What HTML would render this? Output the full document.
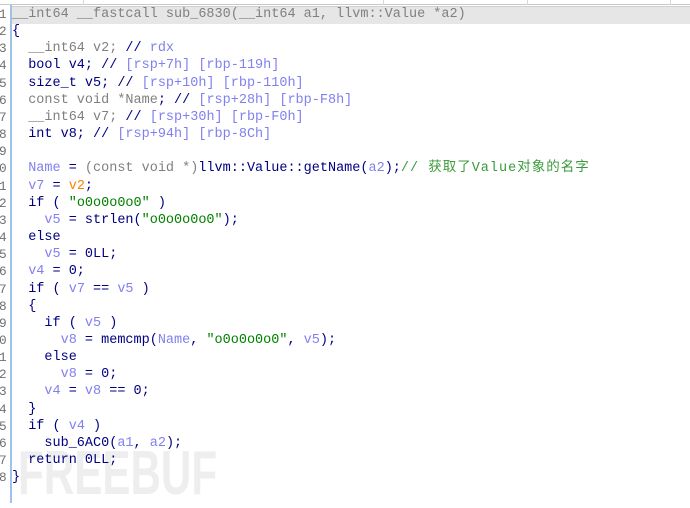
<!DOCTYPE html>
<html><head><meta charset="utf-8"><style>
body{margin:0;width:690px;height:503px;background:#fff;overflow:hidden;position:relative;font-family:"Liberation Mono","Noto Sans CJK SC",monospace;font-size:13.5px;}
.top{position:absolute;left:0;top:4px;width:690px;height:1px;background:#c8c8c8}
.sep{position:absolute;top:0;width:1px;height:5px;background:#d8d8d8}
.vl{position:absolute;left:10px;top:5px;width:2px;height:498px;background:#9fc3e8}
.hl{position:absolute;left:12px;top:6px;width:678px;height:17px;background:#e6e6e6;border-top:1px solid #d0d0d0}
.g{position:absolute;left:-1px;top:6px;color:#707070;line-height:17.15px;white-space:pre;font-size:12.75px}
.c{position:absolute;left:12px;top:6px;line-height:17.15px;white-space:pre;color:#000080}
.v{color:#8080f0}.k{color:#808080}.o{color:#ff8000}.s{color:#008000}.m{color:#3a9a3a;letter-spacing:1px}
.wm{position:absolute;left:18px;top:443px;font:bold 62px/1 "Liberation Sans",sans-serif;color:#eeeeee;transform:scaleX(0.68);transform-origin:0 0}
</style></head><body>
<div class="top"></div><div class="sep" style="left:83px"></div><div class="sep" style="left:383px"></div><div class="sep" style="left:527px"></div><div class="sep" style="left:670px"></div>
<div class="hl"></div>
<div class="wm">FREEBUF</div>
<div class="vl"></div>
<div class="g">1
2
3
4
5
6
7
8
9
0
1
2
3
4
5
6
7
8
9
0
1
2
3
4
5
6
7
8</div>
<div class="c"><span class="k">__int64 __fastcall sub_6830(__int64 a1, llvm::Value *a2)</span>
{
  <span class="k">__int64 v2;</span> // <span class="v">rdx</span>
  bool v4; // <span class="v">[rsp+7h] [rbp-119h]</span>
  size_t v5; // <span class="v">[rsp+10h] [rbp-110h]</span>
  <span class="k">const void *Name</span>; // <span class="v">[rsp+28h] [rbp-F8h]</span>
  <span class="k">__int64 v7;</span> // <span class="v">[rsp+30h] [rbp-F0h]</span>
  int v8; // <span class="v">[rsp+94h] [rbp-8Ch]</span>

  <span class="v">Name</span> = <span class="k">(const void *)</span>llvm::Value::getName(<span class="v">a2</span>);<span class="m">// 获取了Value对象的名字</span>
  <span class="v">v7</span> = <span class="o">v2</span>;
  if ( <span class="s">"o0o0o0o0"</span> )
    <span class="v">v5</span> = strlen(<span class="s">"o0o0o0o0"</span>);
  else
    <span class="v">v5</span> = 0LL;
  <span class="v">v4</span> = 0;
  if ( <span class="v">v7</span> == <span class="v">v5</span> )
  {
    if ( <span class="v">v5</span> )
      <span class="v">v8</span> = memcmp(<span class="v">Name</span>, <span class="s">"o0o0o0o0"</span>, <span class="v">v5</span>);
    else
      <span class="v">v8</span> = 0;
    <span class="v">v4</span> = <span class="v">v8</span> == 0;
  }
  if ( <span class="v">v4</span> )
    sub_6AC0(<span class="v">a1</span>, <span class="v">a2</span>);
  return 0LL;
}</div>
</body></html>
